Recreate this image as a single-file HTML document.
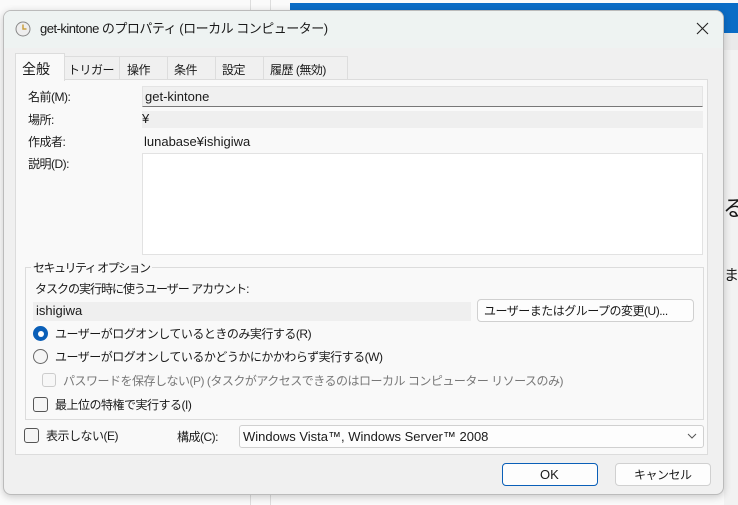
<!DOCTYPE html>
<html><head><meta charset="utf-8"><style>
*{box-sizing:border-box;margin:0;padding:0}
body{width:738px;height:505px;overflow:hidden;background:#f3f3f3;position:relative;font-family:"Liberation Sans","Noto Sans CJK JP",sans-serif;font-size:13px;color:#1a1a1a}
.abs{position:absolute}
.t{position:absolute;white-space:nowrap;line-height:16px}
.j{font-size:12px;letter-spacing:-0.5px}
</style></head><body>
<div class="abs" style="left:0;top:0;width:738px;height:505px;background:#fafafa"></div>
<div class="abs" style="left:250px;top:0;width:1px;height:505px;background:#ddd"></div>
<div class="abs" style="left:270px;top:0;width:1px;height:505px;background:#ddd"></div>
<div class="abs" style="left:290px;top:3px;width:448px;height:30px;background:#0a6cc6"></div>
<div class="abs" style="left:710px;top:33px;width:28px;height:20px;background:#eaeaea"></div>
<div class="abs" style="left:724px;top:50px;width:14px;height:455px;background:#f2f2f2"></div>
<div class="t" style="left:723px;top:196px;font-size:22px;line-height:26px">る</div>
<div class="t" style="left:724px;top:268px;font-size:15px">ま</div>
<div class="abs" style="left:3px;top:10px;width:721px;height:485px;border-radius:8px;background:#f0f0f0;border:1px solid #bbb;box-shadow:0 2px 8px rgba(0,0,0,.2);overflow:hidden">
 <div class="abs" style="left:0;top:0;width:721px;height:37px;background:#eef3f2"></div>
</div>
<svg class="abs" style="left:15px;top:21px" width="16" height="16" viewBox="0 0 16 16"><circle cx="8" cy="8" r="7" fill="#eee" stroke="#888"/><path d="M8 3.5V8h3.5" stroke="#caa040" stroke-width="1.5" fill="none"/></svg>
<div class="t" style="left:40px;top:21px;font-size:13px;letter-spacing:-0.5px">get-kintone のプロパティ (ローカル コンピューター)</div>
<svg class="abs" style="left:696px;top:22px" width="13" height="13"><path d="M1 1L12 12M12 1L1 12" stroke="#222" stroke-width="1.1"/></svg>
<div class="abs" style="left:64px;top:56px;width:284px;height:23px;background:#f0f0f0;border:1px solid #ddd;border-bottom:none"></div>
<div class="abs" style="left:15px;top:79px;width:693px;height:376px;background:#f9f9f9;border:1px solid #dcdcdc"></div>
<div class="abs" style="left:15px;top:53px;width:50px;height:28px;background:#f9f9f9;border:1px solid #dcdcdc;border-bottom:none"></div>
<div class="t" style="left:22px;top:61px;font-size:14px">全般</div>
<div class="t j" style="left:68px;top:62px">トリガー</div>
<div class="abs" style="left:119px;top:57px;width:1px;height:22px;background:#ddd"></div>
<div class="t j" style="left:127px;top:62px">操作</div>
<div class="abs" style="left:167px;top:57px;width:1px;height:22px;background:#ddd"></div>
<div class="t j" style="left:174px;top:62px">条件</div>
<div class="abs" style="left:215px;top:57px;width:1px;height:22px;background:#ddd"></div>
<div class="t j" style="left:222px;top:62px">設定</div>
<div class="abs" style="left:263px;top:57px;width:1px;height:22px;background:#ddd"></div>
<div class="t j" style="left:270px;top:62px">履歴 (無効)</div>
<div class="t j" style="left:28px;top:89px">名前(M):</div>
<div class="abs" style="left:142px;top:86px;width:561px;height:21px;background:#f0f0f0;border:1px solid #e4e4e4;border-bottom:1px solid #777"></div>
<div class="t" style="left:145px;top:89px">get-kintone</div>
<div class="t j" style="left:28px;top:112px">場所:</div>
<div class="abs" style="left:142px;top:111px;width:561px;height:17px;background:#efefef"></div>
<div class="t" style="left:142px;top:111px">¥</div>
<div class="t j" style="left:28px;top:134px">作成者:</div>
<div class="t" style="left:144px;top:134px">lunabase¥ishigiwa</div>
<div class="t j" style="left:28px;top:156px">説明(D):</div>
<div class="abs" style="left:142px;top:153px;width:561px;height:102px;background:#fff;border:1px solid #e2e2e2"></div>
<div class="abs" style="left:25px;top:267px;width:679px;height:153px;border:1px solid #dcdcdc"></div>
<div class="t j" style="left:31px;top:260px;background:#f9f9f9;padding:0 2px;letter-spacing:-1.5px">セキュリティ オプション</div>
<div class="t j" style="left:35px;top:281px;letter-spacing:-1px">タスクの実行時に使うユーザー アカウント:</div>
<div class="abs" style="left:33px;top:302px;width:438px;height:19px;background:#efefef"></div>
<div class="t" style="left:36px;top:303px">ishigiwa</div>
<div class="abs" style="left:477px;top:299px;width:217px;height:23px;background:#fdfdfd;border:1px solid #d0d0d0;border-radius:4px"></div>
<div class="t j" style="left:484px;top:303px">ユーザーまたはグループの変更(U)...</div>
<div class="abs" style="left:33px;top:326px;width:15px;height:15px;border-radius:50%;background:#0a5fb8"></div>
<div class="abs" style="left:37.5px;top:330.5px;width:6px;height:6px;border-radius:50%;background:#fff"></div>
<div class="t j" style="left:55px;top:326px">ユーザーがログオンしているときのみ実行する(R)</div>
<div class="abs" style="left:33px;top:349px;width:15px;height:15px;border-radius:50%;border:1px solid #666;background:#f5f5f5"></div>
<div class="t j" style="left:55px;top:349px">ユーザーがログオンしているかどうかにかかわらず実行する(W)</div>
<div class="abs" style="left:42px;top:373px;width:14px;height:14px;border-radius:3px;border:1px solid #ccc;background:#f7f7f7"></div>
<div class="t j" style="left:63px;top:373px;color:#777">パスワードを保存しない(P) (タスクがアクセスできるのはローカル コンピューター リソースのみ)</div>
<div class="abs" style="left:33px;top:397px;width:15px;height:15px;border-radius:3px;border:1px solid #555;background:#f5f5f5"></div>
<div class="t j" style="left:55px;top:397px">最上位の特権で実行する(I)</div>
<div class="abs" style="left:24px;top:428px;width:15px;height:15px;border-radius:3px;border:1px solid #555;background:#f5f5f5"></div>
<div class="t j" style="left:46px;top:428px">表示しない(E)</div>
<div class="t j" style="left:177px;top:429px">構成(C):</div>
<div class="abs" style="left:239px;top:425px;width:465px;height:23px;background:#fdfdfd;border:1px solid #d0d0d0;border-radius:3px"></div>
<div class="t" style="left:243px;top:429px">Windows Vista™, Windows Server™ 2008</div>
<svg class="abs" style="left:687px;top:433px" width="10" height="6"><path d="M1 1L5 5L9 1" stroke="#555" fill="none"/></svg>
<div class="abs" style="left:502px;top:463px;width:96px;height:23px;background:#fdfdfd;border:1px solid #0a5fb8;border-radius:4px"></div>
<div class="t" style="left:540px;top:467px">OK</div>
<div class="abs" style="left:615px;top:463px;width:96px;height:23px;background:#fdfdfd;border:1px solid #d0d0d0;border-radius:4px"></div>
<div class="t j" style="left:634px;top:467px">キャンセル</div>
</body></html>
